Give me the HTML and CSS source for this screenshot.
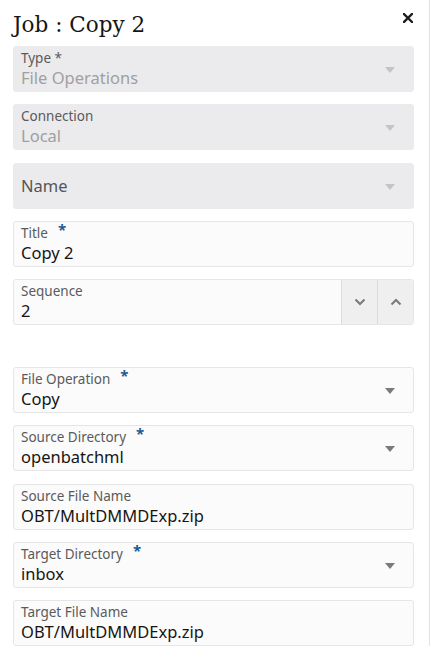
FILE: index.html
```html
<!DOCTYPE html>
<html>
<head>
<meta charset="utf-8">
<link rel="stylesheet" href="styles.css">
</head>
<body>
<div class="panel">
  <div class="header">
    <h1 class="title">Job : Copy 2</h1>
    <button class="close" aria-label="Close">
      <svg width="10" height="10" viewBox="0 0 10 10"><path d="M1 1L9 9M9 1L1 9" stroke="#1e1e1e" stroke-width="2.4" stroke-linecap="square"/></svg>
    </button>
  </div>
  <div class="form">
    <div class="field disabled">
      <div class="text">
        <div class="label">Type *</div>
        <div class="value">File Operations</div>
      </div>
      <span class="caret"></span>
    </div>
    <div class="field disabled">
      <div class="text">
        <div class="label">Connection</div>
        <div class="value">Local</div>
      </div>
      <span class="caret"></span>
    </div>
    <div class="field disabled">
      <div class="text">
        <div class="placeholder">Name</div>
      </div>
      <span class="caret"></span>
    </div>
    <div class="field">
      <div class="text">
        <div class="label">Title<span class="req">*</span></div>
        <div class="value">Copy 2</div>
      </div>
    </div>
    <div class="field spin">
      <div class="text">
        <div class="label">Sequence</div>
        <div class="value">2</div>
      </div>
      <div class="spinbtn">
        <svg width="12" height="8" viewBox="0 0 12 8"><path d="M1.5 1.5L6 6L10.5 1.5" fill="none" stroke="#7a7a7a" stroke-width="2"/></svg>
      </div>
      <div class="spinbtn">
        <svg width="12" height="8" viewBox="0 0 12 8"><path d="M1.5 6.5L6 2L10.5 6.5" fill="none" stroke="#7a7a7a" stroke-width="2"/></svg>
      </div>
    </div>
    <div class="spacer"></div>
    <div class="field">
      <div class="text">
        <div class="label">File Operation<span class="req">*</span></div>
        <div class="value">Copy</div>
      </div>
      <span class="caret"></span>
    </div>
    <div class="field">
      <div class="text">
        <div class="label">Source Directory<span class="req">*</span></div>
        <div class="value">openbatchml</div>
      </div>
      <span class="caret"></span>
    </div>
    <div class="field">
      <div class="text">
        <div class="label">Source File Name</div>
        <div class="value">OBT/MultDMMDExp.zip</div>
      </div>
    </div>
    <div class="field">
      <div class="text">
        <div class="label">Target Directory<span class="req">*</span></div>
        <div class="value">inbox</div>
      </div>
      <span class="caret"></span>
    </div>
    <div class="field">
      <div class="text">
        <div class="label">Target File Name</div>
        <div class="value">OBT/MultDMMDExp.zip</div>
      </div>
    </div>
  </div>
</div>
</body>
</html>
```

FILE: styles.css
```css
html, body {
  margin: 0;
  padding: 0;
  background: #ffffff;
}
body {
  font-family: "Noto Sans", "Open Sans", sans-serif;
  color: #161513;
}
.panel {
  width: 401px;
  height: 646px;
  padding: 0 15px 0 13px;
  border-right: 1px solid #e2e2e2;
  overflow: hidden;
}
.header {
  height: 46px;
  display: flex;
  justify-content: space-between;
  align-items: flex-start;
}
.title {
  margin: 0;
  padding-top: 11px;
  font-family: "DejaVu Serif", "Liberation Serif", serif;
  font-weight: normal;
  font-size: 21.5px;
  line-height: 28px;
  color: #161513;
}
.close {
  border: 0;
  background: none;
  padding: 0;
  margin: 13px 1px 0 0;
  width: 10px;
  height: 10px;
  display: flex;
}
.form {
  display: flex;
  flex-direction: column;
  gap: 12.25px;
}
.field {
  height: 46px;
  box-sizing: border-box;
  border: 1px solid #e6e6e6;
  border-radius: 3px;
  background: #fbfbfc;
  display: flex;
  align-items: center;
}
.field.disabled {
  background: #ebebed;
  border-color: #ebebed;
}
.text {
  flex: 1;
  padding: 0 7px;
  display: flex;
  flex-direction: column;
  justify-content: center;
}
.label {
  font-size: 13.5px;
  line-height: 18px;
  color: #5a5a5a;
  white-space: nowrap;
}
.value {
  font-size: 16.5px;
  line-height: 22px;
  color: #161513;
  white-space: nowrap;
}
.disabled .value {
  color: #a0a0a0;
}
.placeholder {
  font-size: 16.5px;
  line-height: 22px;
  color: #555555;
}
.req {
  display: inline-block;
  color: #1d5b94;
  font-weight: bold;
  font-size: 15px;
  line-height: 21px;
  vertical-align: top;
  margin: -5px 0 0 10px;
}
.caret {
  width: 0;
  height: 0;
  border-left: 5.5px solid transparent;
  border-right: 5.5px solid transparent;
  border-top: 6px solid #7a7a7a;
  margin: 2px 18px 0 0;
}
.disabled .caret {
  border-top-color: #c4c4c4;
}
.spin {
  align-items: stretch;
  overflow: hidden;
}
.spinbtn {
  width: 35px;
  background: #efeff0;
  border-left: 1px solid #dcdcdc;
  display: flex;
  align-items: center;
  justify-content: center;
}
.spacer {
  height: 17.5px;
}
```
